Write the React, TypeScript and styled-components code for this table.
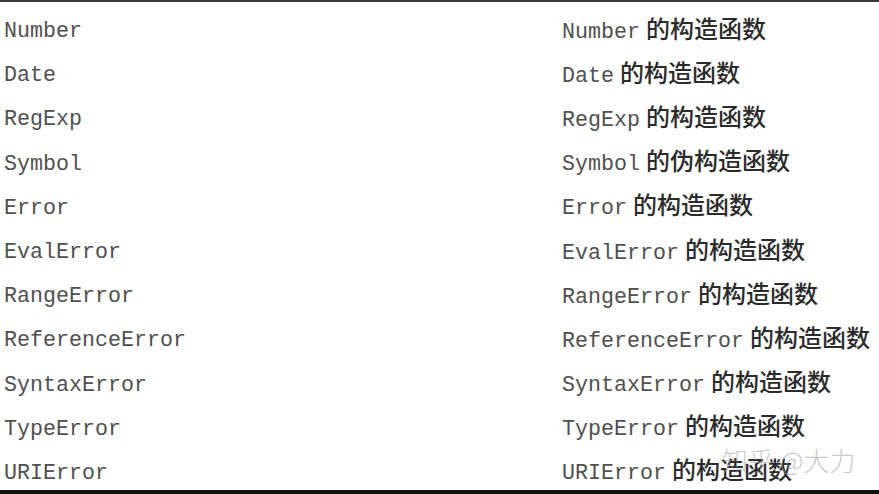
import styled, { createGlobalStyle } from "styled-components";

const GlobalStyle = createGlobalStyle`
  html, body {
    margin: 0;
    padding: 0;
    background: #ffffff;
  }
`;

interface IRow {
  name: string;
  desc: string;
}

const rows: IRow[] = [
  { name: "Number", desc: "的构造函数" },
  { name: "Date", desc: "的构造函数" },
  { name: "RegExp", desc: "的构造函数" },
  { name: "Symbol", desc: "的伪构造函数" },
  { name: "Error", desc: "的构造函数" },
  { name: "EvalError", desc: "的构造函数" },
  { name: "RangeError", desc: "的构造函数" },
  { name: "ReferenceError", desc: "的构造函数" },
  { name: "SyntaxError", desc: "的构造函数" },
  { name: "TypeError", desc: "的构造函数" },
  { name: "URIError", desc: "的构造函数" },
];

const App = () => {
  return (
    <Page>
      <GlobalStyle />
      <Table>
        {rows.map((row) => (
          <Row key={row.name}>
            <Code>{row.name}</Code>
            <Desc>
              <Code>{row.name}</Code>
              <Han>{row.desc}</Han>
            </Desc>
          </Row>
        ))}
      </Table>
      <Watermark>知乎 @大力</Watermark>
    </Page>
  );
};

export default App;

const Page = styled.div`
  position: relative;
  width: 879px;
  height: 494px;
  overflow: hidden;
  background: #ffffff;
`;
const Table = styled.div`
  box-sizing: border-box;
  height: 494px;
  border-top: 2px solid #3a3a3a;
  border-bottom: 4px solid #111111;
  padding-top: 8px;
  overflow: hidden;
  display: flex;
  flex-direction: column;
`;
const Row = styled.div`
  flex: 0 0 44.2px;
  display: grid;
  grid-template-columns: 562px 1fr;
  align-items: center;
  padding-left: 4px;
`;
const Code = styled.span`
  font-family: "Liberation Mono", "Courier New", monospace;
  font-size: 21.67px;
  line-height: 26px;
  color: #505050;
  white-space: pre;
`;
const Desc = styled.div`
  display: flex;
  align-items: baseline;
  margin-left: -4px;
`;
const Han = styled.span`
  font-family: "Noto Sans CJK SC", sans-serif;
  font-size: 24px;
  font-weight: 500;
  line-height: 18px;
  color: #2b2b2b;
  margin-left: 6px;
`;
const Watermark = styled.div`
  position: absolute;
  left: 722px;
  top: 447px;
  font-family: "Noto Sans CJK SC", sans-serif;
  font-size: 26px;
  font-weight: 300;
  line-height: 1;
  color: rgba(150, 150, 150, 0.5);
  white-space: nowrap;
`;
